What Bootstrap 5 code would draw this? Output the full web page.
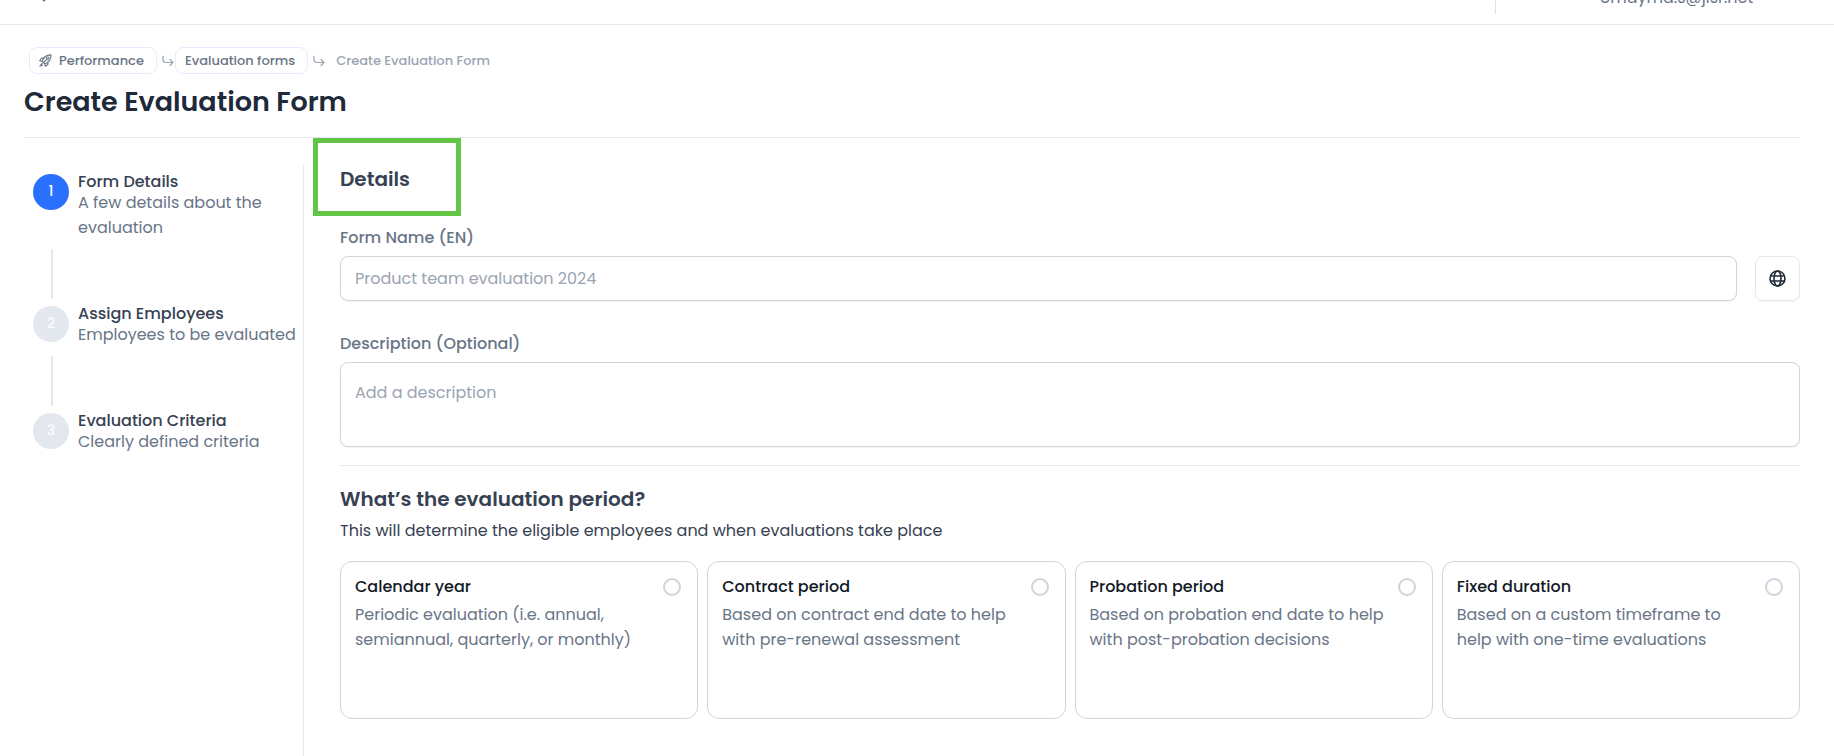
<!DOCTYPE html>
<html lang="en">
<head>
<meta charset="utf-8">
<meta name="viewport" content="width=device-width, initial-scale=1">
<title>Create Evaluation Form</title>
<link href="https://cdn.jsdelivr.net/npm/bootstrap@5.3.0/dist/css/bootstrap.min.css" rel="stylesheet">
<style>
:root{--ink:#202939;--ink-2:#364152;--muted:#697586;--faint:#9aa4b2;--line:#cdd5df;--soft:#e3e8ef}
body{font-family:Poppins,Inter,sans-serif;font-size:16px;line-height:25px;color:var(--ink-2);background:#fff;min-height:100vh}
.topbar{height:25px;border-bottom:1px solid #e9e9ec;overflow:hidden}
.topbar .account{border-left:1px solid #dfe1e6;width:339px;margin-bottom:10px;padding:20px 0 4px 104px;color:var(--muted)}
.topbar .search{color:var(--muted);margin:0 0 22px 38px}
.page{padding:22px 34px 0 24px}
.crumbs{font-size:13px;line-height:25px;font-weight:500;padding-left:5px}
.crumbs a{border:1px solid #ebe9fe;border-radius:8px;color:var(--muted);padding:0 12px 0 9px}
.crumbs a svg{margin-right:7px}
.crumbs .here{color:var(--faint);margin-left:10px}
.crumbs .turn{color:var(--faint);margin:0 1px 0 5px}
h1{font-size:27px;line-height:36px;font-weight:600;color:var(--ink);margin:10px 0 17px}
.rule{border-top:1px solid var(--soft)}
.steps{width:280px;padding:8px 8px 0 9px;margin-top:27px;border-right:1px solid var(--soft)}
.step{gap:9px}
.dot{width:36px;height:36px;margin-top:1px;padding-bottom:2px;background:var(--soft);color:#f8fafc;font-size:14px;font-weight:500}
.dot.on{background:#2970ff;color:#fff}
.stem{width:2px;height:50px;margin:9px 0 6px 18px;background:var(--soft)}
.steps .name{line-height:17px;font-weight:500}
.hint{color:var(--muted)}
main{padding:28px 0 36px 36px}
h2{font-size:20px;line-height:26px;font-weight:600;color:var(--ink-2);margin:0}
.marked::after{content:"";position:absolute;inset:-28px auto auto -27px;width:148px;height:78px;border:5px solid #62c546}
.field-row{margin:33px 0 30px}
.form-label{display:block;font-weight:500;color:var(--muted);line-height:25px;margin-bottom:6px}
.form-control{font-size:16px;line-height:25px;padding:9px 14px;border-color:var(--line);border-radius:8px;box-shadow:0 1px 2px #1018280d}
.form-control::placeholder{color:var(--faint);opacity:1}
textarea.form-control{height:85px;padding-top:17px;resize:none}
.globe{width:45px;height:45px;margin-left:18px;border:1px solid var(--soft);border-radius:8px;color:var(--ink);box-shadow:0 1px 2px #1018280d}
.split{margin:18px 0 20px}
.intro{margin:6px 0 18px}
.choices{gap:9px}
.choice{flex:1 1 0;min-width:220px;min-height:158px;border:1px solid var(--line);border-radius:12px;padding:12px 14px}
.choice .name{color:#121926;font-weight:500;margin-bottom:3px}
.choice .hint{max-width:300px}
.choice .form-check-input{width:18px;height:18px;border:2px solid var(--line);margin:4px 2px 0 0}
</style>
</head>
<body class="d-flex flex-column">
<header class="topbar d-flex justify-content-between align-items-end">
  <svg class="search" width="12" height="12" viewBox="0 0 12 12" fill="none" stroke="currentColor" stroke-width="1.3" aria-hidden="true"><path d="M4 8.500L6 11l2-2.500"/></svg>
  <div class="account">omayma.s@jisr.net</div>
</header>
<div class="page d-flex flex-column flex-grow-1">
  <nav class="crumbs d-flex align-items-center" aria-label="Breadcrumb">
    <a href="#" class="d-flex align-items-center text-decoration-none"><svg width="13" height="13" viewBox="0 0 14 14" fill="none" stroke="currentColor" stroke-width="1.200" stroke-linecap="round" stroke-linejoin="round" aria-hidden="true"><path d="M3.500 8C4.500 4 8 1 13 1c0 5-3 8.500-7 9.500L3.500 8zM5.500 4.500L3 4.300.8 7.200l2.700.8M9.500 8.500l.2 2.500-2.900 2.200L6 10.500M5.500 8.500l2.500-2.500M3.300 10.200L1 13l2.800-1"/><circle cx="9.500" cy="4.500" r="1.300"/></svg>Performance</a>
    <svg class="turn" width="12" height="12" viewBox="0 0 12 12" fill="none" stroke="currentColor" stroke-width="1.200" stroke-linecap="round" stroke-linejoin="round" aria-hidden="true"><path d="M1 1v3.500q0 3 3 3h7M8 4.500l3 3-3 3"/></svg>
    <a href="#" class="text-decoration-none">Evaluation forms</a>
    <svg class="turn" width="12" height="12" viewBox="0 0 12 12" fill="none" stroke="currentColor" stroke-width="1.200" stroke-linecap="round" stroke-linejoin="round" aria-hidden="true"><path d="M1 1v3.500q0 3 3 3h7M8 4.500l3 3-3 3"/></svg>
    <span class="here" aria-current="page">Create Evaluation Form</span>
  </nav>
  <h1>Create Evaluation Form</h1>
  <div class="rule"></div>
  <div class="d-flex flex-grow-1">
    <aside class="steps flex-shrink-0">
      <div class="step d-flex"><div class="dot on rounded-circle d-flex align-items-center justify-content-center flex-shrink-0">1</div><div><div class="name">Form Details</div><div class="hint">A few details about the evaluation</div></div></div>
      <div class="stem"></div>
      <div class="step d-flex"><div class="dot rounded-circle d-flex align-items-center justify-content-center flex-shrink-0">2</div><div><div class="name">Assign Employees</div><div class="hint text-nowrap">Employees to be evaluated</div></div></div>
      <div class="stem"></div>
      <div class="step d-flex"><div class="dot rounded-circle d-flex align-items-center justify-content-center flex-shrink-0">3</div><div><div class="name">Evaluation Criteria</div><div class="hint">Clearly defined criteria</div></div></div>
    </aside>
    <main class="flex-grow-1">
      <form>
        <h2 class="marked position-relative">Details</h2>
        <div class="field-row">
          <label class="form-label" for="formName">Form Name (EN)</label>
          <div class="d-flex">
            <input class="form-control" id="formName" type="text" placeholder="Product team evaluation 2024">
            <button class="globe btn p-0 flex-shrink-0 d-flex align-items-center justify-content-center" type="button" aria-label="Translate"><svg width="17" height="17" viewBox="0 0 17 17" fill="none" stroke="currentColor" stroke-width="1.600" aria-hidden="true"><circle cx="8.500" cy="8.500" r="7.500"/><ellipse cx="8.500" cy="8.500" rx="3.500" ry="7.500"/><path d="M1.500 6h14M1.500 11h14"/></svg></button>
          </div>
        </div>
        <label class="form-label" for="description">Description (Optional)</label>
        <textarea class="form-control" id="description" placeholder="Add a description"></textarea>
        <div class="rule split"></div>
        <h2>What’s the evaluation period?</h2>
        <p class="intro">This will determine the eligible employees and when evaluations take place</p>
        <div class="choices d-flex flex-wrap">
          <div class="choice d-flex justify-content-between align-items-start"><label for="p1"><span class="name d-block">Calendar year</span><span class="hint d-block">Periodic evaluation (i.e. annual, semiannual, quarterly, or monthly)</span></label><input class="form-check-input flex-shrink-0" type="radio" name="period" id="p1"></div>
          <div class="choice d-flex justify-content-between align-items-start"><label for="p2"><span class="name d-block">Contract period</span><span class="hint d-block">Based on contract end date to help with pre-renewal assessment</span></label><input class="form-check-input flex-shrink-0" type="radio" name="period" id="p2"></div>
          <div class="choice d-flex justify-content-between align-items-start"><label for="p3"><span class="name d-block">Probation period</span><span class="hint d-block">Based on probation end date to help with post-probation decisions</span></label><input class="form-check-input flex-shrink-0" type="radio" name="period" id="p3"></div>
          <div class="choice d-flex justify-content-between align-items-start"><label for="p4"><span class="name d-block">Fixed duration</span><span class="hint d-block">Based on a custom timeframe to help with one-time evaluations</span></label><input class="form-check-input flex-shrink-0" type="radio" name="period" id="p4"></div>
        </div>
      </form>
    </main>
  </div>
</div>
<script src="https://cdn.jsdelivr.net/npm/bootstrap@5.3.0/dist/js/bootstrap.bundle.min.js"></script>
</body>
</html>
